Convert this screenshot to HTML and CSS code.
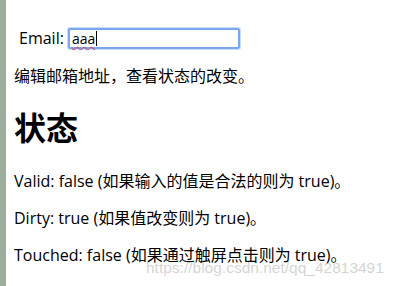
FILE: index.html
```html
<!DOCTYPE html>
<html>
<head>
<meta charset="utf-8">
<link rel="stylesheet" href="styles.css">
</head>
<body>
<div class="strip"></div>
<div class="page">
  <form class="form">
    <label class="field">Email: <span class="input"><span class="value">aaa</span><span class="caret"></span></span></label>
  </form>
  <p class="text">编辑邮箱地址，查看状态的改变。</p>
  <h1 class="title">状态</h1>
  <p class="text">Valid: false (如果输入的值是合法的则为 true)。</p>
  <p class="text">Dirty: true (如果值改变则为 true)。</p>
  <p class="text">Touched: false (如果通过触屏点击则为 true)。</p>
</div>
<div class="watermark">https://blog.csdn.net/qq_42813491</div>
</body>
</html>
```
FILE: styles.css
```css
html, body {
  margin: 0;
  padding: 0;
  background: #fff;
  height: 100%;
  overflow: hidden;
}
body {
  display: flex;
  font-family: "Open Sans", "Noto Sans CJK SC", sans-serif;
  font-size: 16px;
  color: #000;
  position: relative;
}
.strip {
  width: 6px;
  flex: none;
  background: #9daf9c;
}
.page {
  padding: 0 8px;
  flex: 1;
}
.form {
  margin: 27px 0 17px 5px;
}
.field {
  display: flex;
  align-items: center;
  gap: 4px;
  line-height: 22px;
}
.input {
  display: flex;
  align-items: center;
  box-sizing: border-box;
  width: 172px;
  height: 21px;
  padding: 0 2px;
  border: 2px solid #7ba7ee;
  border-radius: 2px;
  font-size: 14px;
  line-height: 17px;
  box-shadow: 0 0 0 1px #c8dbf8;
}
.value {
  text-decoration: underline wavy #e03c3c;
  text-decoration-thickness: 1px;
  text-underline-offset: 2px;
}
.caret {
  width: 1px;
  height: 15px;
  background: #000;
  margin-left: 1px;
}
.text {
  margin: 16px 0;
  line-height: 21px;
}
.title {
  font-size: 32px;
  font-weight: bold;
  margin: 21px 0 23px;
  line-height: 40px;
}
.watermark {
  position: absolute;
  left: 146px;
  top: 259px;
  font-family: "Liberation Sans", sans-serif;
  font-size: 15.5px;
  color: rgba(175, 175, 175, 0.55);
  pointer-events: none;
  white-space: nowrap;
}
```
